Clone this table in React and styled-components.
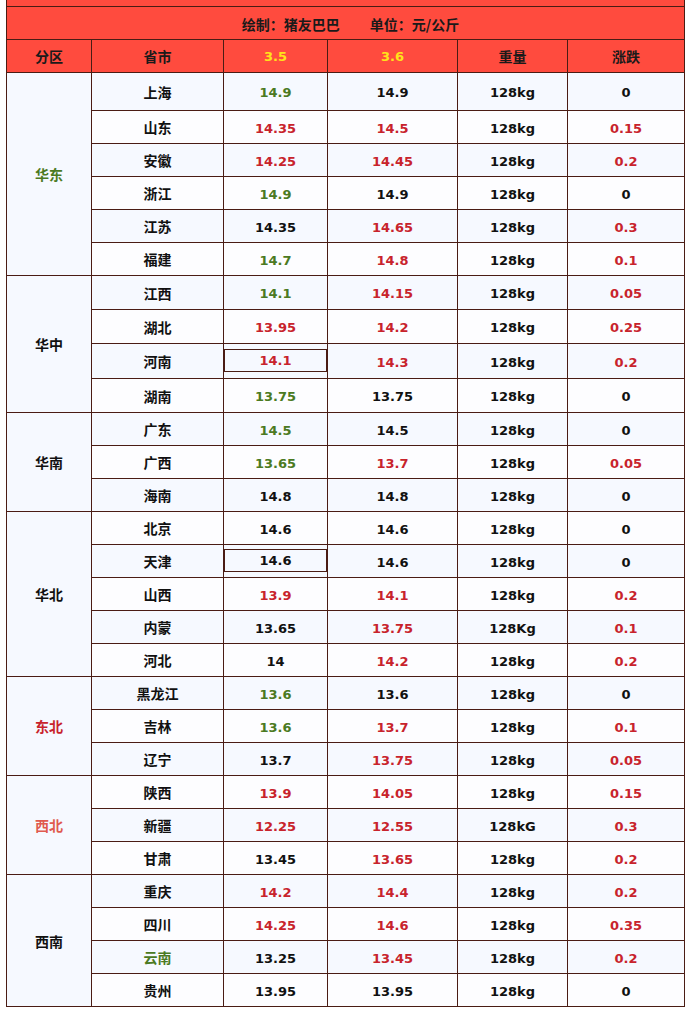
import styled, { createGlobalStyle } from "styled-components";

const G = "g";
const R = "r";
const K = "k";

const colors = {
  g: "#4b7a22",
  r: "#c8232c",
  k: "#111111",
  s: "#e05a4e",
};

// [province, 3.5, color, 3.6, color, weight, change, color, boxed, provinceColor]
const regions = [
  {
    name: "华东",
    color: G,
    rows: [
      ["上海", "14.9", G, "14.9", K, "128kg", "0", K],
      ["山东", "14.35", R, "14.5", R, "128kg", "0.15", R],
      ["安徽", "14.25", R, "14.45", R, "128kg", "0.2", R],
      ["浙江", "14.9", G, "14.9", K, "128kg", "0", K],
      ["江苏", "14.35", K, "14.65", R, "128kg", "0.3", R],
      ["福建", "14.7", G, "14.8", R, "128kg", "0.1", R],
    ],
    heights: [38, 33, 33, 33, 33, 33],
  },
  {
    name: "华中",
    color: K,
    rows: [
      ["江西", "14.1", G, "14.15", R, "128kg", "0.05", R],
      ["湖北", "13.95", R, "14.2", R, "128kg", "0.25", R],
      ["河南", "14.1", R, "14.3", R, "128kg", "0.2", R, true],
      ["湖南", "13.75", G, "13.75", K, "128kg", "0", K],
    ],
    heights: [34, 34, 35, 34],
  },
  {
    name: "华南",
    color: K,
    rows: [
      ["广东", "14.5", G, "14.5", K, "128kg", "0", K],
      ["广西", "13.65", G, "13.7", R, "128kg", "0.05", R],
      ["海南", "14.8", K, "14.8", K, "128kg", "0", K],
    ],
    heights: [33, 33, 33],
  },
  {
    name: "华北",
    color: K,
    rows: [
      ["北京", "14.6", K, "14.6", K, "128kg", "0", K],
      ["天津", "14.6", K, "14.6", K, "128kg", "0", K, true],
      ["山西", "13.9", R, "14.1", R, "128kg", "0.2", R],
      ["内蒙", "13.65", K, "13.75", R, "128Kg", "0.1", R],
      ["河北", "14", K, "14.2", R, "128kg", "0.2", R],
    ],
    heights: [33, 33, 33, 33, 33],
  },
  {
    name: "东北",
    color: R,
    rows: [
      ["黑龙江", "13.6", G, "13.6", K, "128kg", "0", K],
      ["吉林", "13.6", G, "13.7", R, "128kg", "0.1", R],
      ["辽宁", "13.7", K, "13.75", R, "128kg", "0.05", R],
    ],
    heights: [33, 33, 33],
  },
  {
    name: "西北",
    color: "s",
    rows: [
      ["陕西", "13.9", R, "14.05", R, "128kg", "0.15", R],
      ["新疆", "12.25", R, "12.55", R, "128kG", "0.3", R],
      ["甘肃", "13.45", K, "13.65", R, "128kg", "0.2", R],
    ],
    heights: [33, 33, 33],
  },
  {
    name: "西南",
    color: K,
    rows: [
      ["重庆", "14.2", R, "14.4", R, "128kg", "0.2", R],
      ["四川", "14.25", R, "14.6", R, "128kg", "0.35", R],
      ["云南", "13.25", K, "13.45", R, "128kg", "0.2", R, false, G],
      ["贵州", "13.95", K, "13.95", K, "128kg", "0", K],
    ],
    heights: [33, 33, 33, 33],
  },
];

const GlobalStyle = createGlobalStyle`
  html, body {
    margin: 0;
    padding: 0;
    background: #ffffff;
  }
`;

const Page = styled.div`
  padding-left: 6px;
  width: 692px;
  height: 1013px;
  overflow: hidden;
  box-sizing: border-box;
`;

const Table = styled.table`
  width: 678px;
  table-layout: fixed;
  border-collapse: collapse;
  font-family: "DejaVu Sans", "Noto Sans CJK SC", sans-serif;
  font-weight: bold;
  color: #111;
`;

const Row = styled.tr`
  height: ${(p) => p.$h}px;
  background: ${(p) => (p.$alt ? "#fdfdff" : "#f6f9ff")};
`;

const RedRow = styled.tr`
  height: ${(p) => p.$h}px;
  background: #ff4b3e;
`;

const Cell = styled.td`
  border: 1px solid #4a1c14;
  padding: 3px 0 0;
  text-align: center;
  vertical-align: middle;
  font-size: ${(p) => (p.$cjk ? "14px" : "13px")};
  color: ${(p) => colors[p.$c] || colors.k};
  line-height: 1;
`;

const RegionCell = styled(Cell)`
  background: #f6f9ff;
  font-size: 14px;
`;

const HeadCell = styled(Cell)`
  padding-top: 2px;
  color: ${(p) => (p.$yellow ? "#ffe21a" : "#1a1a1a")};
`;

const Title = styled.td`
  border: 1px solid #4a1c14;
  border-top: ${(p) => (p.$top ? "none" : "1px solid #4a1c14")};
  padding: 2px 0 0 10px;
  text-align: center;
  font-size: 14px;
  color: #1a1a1a;
  font-family: "Noto Sans CJK SC", sans-serif;
  font-weight: bold;
`;

const Gap = styled.span`
  display: inline-block;
  width: 30px;
`;

const Boxed = styled.span`
  display: block;
  height: 21px;
  line-height: 21px;
  margin-top: -3px;
  border: 1px solid #4a1c14;
`;

export default function App() {
  let idx = 0;
  return (
    <Page>
      <GlobalStyle />
      <Table>
        <colgroup>
          <col style={{ width: 85 }} />
          <col style={{ width: 132 }} />
          <col style={{ width: 104 }} />
          <col style={{ width: 130 }} />
          <col style={{ width: 110 }} />
          <col style={{ width: 117 }} />
        </colgroup>
        <tbody>
          <RedRow $h={6}>
            <Title colSpan={6} $top />
          </RedRow>
          <RedRow $h={33}>
            <Title colSpan={6}>
              绘制：猪友巴巴<Gap />单位：元/公斤
            </Title>
          </RedRow>
          <RedRow $h={33}>
            <HeadCell $cjk>分区</HeadCell>
            <HeadCell $cjk>省市</HeadCell>
            <HeadCell $yellow>3.5</HeadCell>
            <HeadCell $yellow>3.6</HeadCell>
            <HeadCell $cjk>重量</HeadCell>
            <HeadCell $cjk>涨跌</HeadCell>
          </RedRow>
          {regions.map((reg) =>
            reg.rows.map((r, i) => {
              const alt = idx++ % 2 === 1;
              return (
                <Row key={r[0]} $h={reg.heights[i]} $alt={alt}>
                  {i === 0 && (
                    <RegionCell rowSpan={reg.rows.length} $c={reg.color}>
                      {reg.name}
                    </RegionCell>
                  )}
                  <Cell $cjk $c={r[9] || K}>
                    {r[0]}
                  </Cell>
                  <Cell $c={r[2]}>{r[8] ? <Boxed>{r[1]}</Boxed> : r[1]}</Cell>
                  <Cell $c={r[4]}>{r[3]}</Cell>
                  <Cell $c={K}>{r[5]}</Cell>
                  <Cell $c={r[7]}>{r[6]}</Cell>
                </Row>
              );
            })
          )}
        </tbody>
      </Table>
    </Page>
  );
}
